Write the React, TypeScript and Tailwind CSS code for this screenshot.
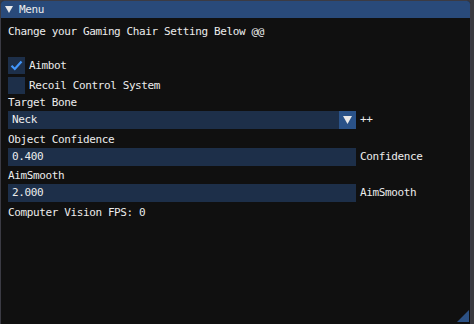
import React from 'react';

const mono = { fontFamily: '"DejaVu Sans Mono", "Liberation Mono", monospace' };

const Checkbox = ({ label, checked }: { label: string; checked?: boolean }) => (
  <div className="flex items-center h-[17px]">
    <div className="w-[17px] h-[17px] bg-[#1d2f49] flex items-center justify-center">
      {checked && (
        <svg width="13" height="13" viewBox="0 0 13 13">
          <path d="M1.5 6.8 L4.8 10 L11.5 2.5" stroke="#4296fa" strokeWidth="2.2" fill="none" />
        </svg>
      )}
    </div>
    <span className="ml-[4px]">{label}</span>
  </div>
);

const Field = ({ value, label, combo }: { value: string; label: string; combo?: boolean }) => (
  <div className="flex items-center h-[18px]">
    <div className="w-[348px] h-[18px] bg-[#1d2f49] flex items-center">
      <span className="pl-[4px] flex-1">{value}</span>
      {combo && (
        <div className="w-[17px] h-[18px] bg-[#2a5288] flex items-center justify-center">
          <svg width="9" height="8" viewBox="0 0 9 8">
            <path d="M0 0 H9 L4.5 8 Z" fill="#e8e8e8" />
          </svg>
        </div>
      )}
    </div>
    <span className="ml-[4px]">{label}</span>
  </div>
);

const App = () => {
  return (
    <div className="w-[474px] h-[324px] bg-[#3a3a3f] overflow-hidden">
      <div
        className="relative w-[471px] h-[326px] bg-[#101010] border border-[#3b3b44] rounded-t-[4px] text-[11px] tracking-[-0.38px] text-[#ececec] leading-[12px]"
        style={mono}
      >
        <div className="h-[17px] bg-[#294a7a] rounded-t-[3px] flex items-center pl-[4px]">
          <svg width="8" height="7" viewBox="0 0 8 7" className="mr-[6px]">
            <path d="M0 0 H8 L4 7 Z" fill="#e8e8e8" />
          </svg>
          <span>Menu</span>
        </div>
        <div className="pl-[7px] flex flex-col">
          <div className="mt-[8px] h-[12px]">Change your Gaming Chair Setting Below @@</div>
          <div className="mt-[19px]">
            <Checkbox label="Aimbot" checked />
          </div>
          <div className="mt-[3px]">
            <Checkbox label="Recoil Control System" />
          </div>
          <div className="mt-[3px] h-[12px]">Target Bone</div>
          <div className="mt-[2px]">
            <Field value="Neck" label="++" combo />
          </div>
          <div className="mt-[5px] h-[12px]">Object Confidence</div>
          <div className="mt-[2px]">
            <Field value="0.400" label="Confidence" />
          </div>
          <div className="mt-[4px] h-[12px]">AimSmooth</div>
          <div className="mt-[2px]">
            <Field value="2.000" label="AimSmooth" />
          </div>
          <div className="mt-[5px] h-[12px]">Computer Vision FPS: 0</div>
        </div>
        <svg width="12" height="12" viewBox="0 0 12 12" className="absolute right-[1px] bottom-[3px]">
          <path d="M12 0 V12 H0 Z" fill="#2c5184" />
        </svg>
      </div>
    </div>
  );
};

export default App;
